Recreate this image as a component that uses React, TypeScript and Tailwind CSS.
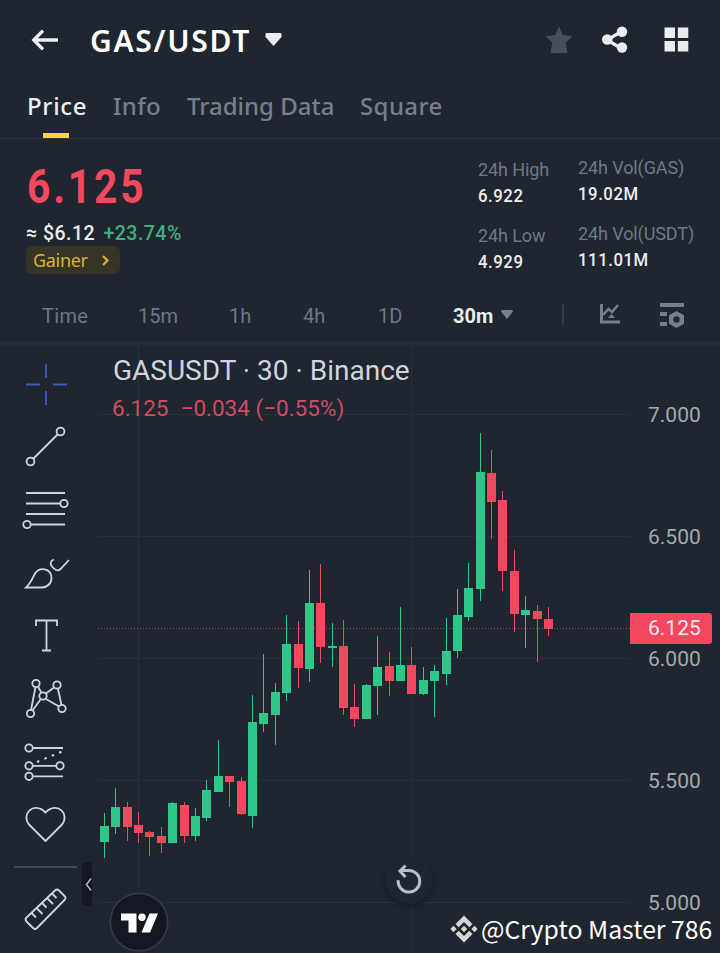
import React from 'react';

type Candle = {
  x: number;
  high: number;
  top: number;
  bottom: number;
  low: number;
  up: boolean;
};

const GREEN = '#2dc78a';
const RED = '#f4485f';

// [left, high, top, bottom, low, direction]
const rawCandles: [number, number, number, number, number, number][] = [
  [100, 813, 826, 842, 858, 1],
  [111, 788, 807, 827, 834, 1],
  [123, 802, 807, 827, 841, 0],
  [134, 812, 825, 833, 843, 0],
  [145, 831, 832, 837, 856, 0],
  [157, 827, 836, 843, 853, 0],
  [168, 802, 803, 843, 843, 1],
  [180, 802, 805, 836, 843, 0],
  [191, 808, 816, 836, 841, 1],
  [202, 780, 790, 818, 821, 1],
  [214, 740, 776, 792, 792, 1],
  [225, 776, 776, 782, 807, 0],
  [237, 777, 781, 814, 815, 0],
  [248, 695, 722, 816, 828, 1],
  [259, 654, 713, 724, 732, 1],
  [271, 683, 692, 715, 745, 1],
  [282, 615, 644, 693, 701, 1],
  [294, 621, 644, 668, 688, 0],
  [305, 570, 603, 669, 682, 1],
  [316, 564, 603, 647, 663, 0],
  [328, 623, 646, 648, 667, 1],
  [339, 620, 646, 708, 715, 0],
  [350, 684, 707, 719, 727, 0],
  [362, 684, 685, 719, 719, 1],
  [373, 636, 667, 686, 715, 1],
  [385, 652, 666, 681, 696, 0],
  [396, 607, 665, 681, 681, 1],
  [407, 647, 665, 694, 694, 0],
  [419, 667, 680, 694, 695, 1],
  [430, 665, 671, 681, 717, 1],
  [442, 618, 651, 674, 685, 1],
  [453, 589, 615, 651, 658, 1],
  [464, 563, 588, 617, 621, 1],
  [476, 433, 472, 589, 601, 1],
  [487, 450, 473, 502, 539, 0],
  [498, 491, 500, 571, 591, 0],
  [510, 550, 571, 614, 632, 0],
  [521, 596, 610, 615, 648, 1],
  [533, 605, 611, 619, 662, 0],
  [544, 607, 619, 629, 636, 0],
];

const candles: Candle[] = rawCandles.map(([x, high, top, bottom, low, up]) => ({
  x,
  high,
  top,
  bottom,
  low,
  up: up === 1,
}));

const prices = ['7.000', '6.500', '6.000', '5.500', '5.000'];

const ToolIcon = ({ children }: { children: React.ReactNode }) => (
  <svg
    width="48"
    height="48"
    viewBox="0 0 48 48"
    fill="none"
    stroke="#d0d4de"
    strokeWidth="1.8"
    className="block shrink-0"
  >
    {children}
  </svg>
);

const Header = () => (
  <header className="flex h-[80px] items-center pl-[31px] pr-[31px]">
    <svg width="28" height="22" viewBox="0 0 28 22" fill="none" stroke="#eaecef" strokeWidth="3.4" className="block">
      <path d="M12 1.600 2.800 11l9.200 9.400M2.500 11H27" />
    </svg>
    <h1 className="ml-[31px] mt-[2px] whitespace-nowrap font-['Noto_Sans'] text-[30px] font-semibold leading-[36px] tracking-[1.7px] text-white">
      GAS/USDT
    </h1>
    <svg width="17" height="14" viewBox="0 0 17 14" fill="#eaecef" className="ml-[14px] block">
      <path d="M1.500 0h14q1.200.2 1 1.500v2.500L8.500 13 .5 4V1.500Q.3.2 1.500 0Z" />
    </svg>
    <div className="ml-auto flex items-center">
      <svg width="28" height="28" viewBox="0 0 28 28" fill="#474f5e" stroke="#474f5e" strokeLinejoin="round" className="block">
        <path d="m15 1.500 3.600 8 9 1-6.600 6.300 2 9.700H7l2-9.700L2.400 10.500l9-1Z" />
      </svg>
      <svg width="28" height="28" viewBox="0 0 28 28" fill="#eaecef" className="ml-[28px] block">
        <path d="M21.500 5.500 7 14l14.500 8.500" fill="none" stroke="#eaecef" strokeWidth="3.200" />
        <circle cx="7.300" cy="13.500" r="5.300" />
        <circle cx="22" cy="5.700" r="5.200" />
        <circle cx="22" cy="21.500" r="5.200" />
      </svg>
      <svg width="25" height="26" viewBox="0 0 25 26" fill="#eaecef" className="ml-[36px] block">
        <path d="M.5.500h10.500V11H.5ZM13.800.5h10.500V11H13.800ZM.5 14h10.500v10.500H.5ZM13.800 14h10.500v10.500H13.800Z" />
      </svg>
    </div>
  </header>
);

const Tabs = () => (
  <nav className="flex h-[59px] border-b border-[#2f3641] pl-[27px] font-['Noto_Sans'] text-[24px] font-medium leading-[32px] text-[#777f8f]">
    <div className="flex w-[59px] flex-col">
      <span className="mt-[10px] whitespace-nowrap tracking-[0.700px] text-[#eaecef]">Price</span>
      <span className="ml-[16px] mt-auto h-[5px] w-[26px] bg-[#f5d14c]" />
    </div>
    <span className="ml-[27px] mt-[10px] w-[47px] whitespace-nowrap tracking-[0.300px]">Info</span>
    <span className="ml-[27px] mt-[10px] w-[146px] whitespace-nowrap">Trading Data</span>
    <span className="ml-[27px] mt-[10px] whitespace-nowrap tracking-[0.400px]">Square</span>
  </nav>
);

const Stat = ({ label, value }: { label: string; value: string }) => (
  <div className="h-[66px] whitespace-nowrap">
    <div className="text-[18px] leading-[26px] tracking-[-0.100px] text-[#6f7787]">{label}</div>
    <div className="origin-left scale-x-[0.93] text-[18px] font-medium leading-[26px] tracking-[0.600px] text-[#eaecef]">
      {value}
    </div>
  </div>
);

const Summary = () => (
  <section className="flex h-[148px] pl-[26px] font-[Roboto]">
    <div className="w-[452px]">
      <div className="ml-px mt-[19px] origin-left scale-x-[0.85] whitespace-nowrap text-[48px] font-bold leading-[58px] tracking-[3.300px] text-[#f4485f]">
        6.125
      </div>
      <div className="mt-[4px] flex h-[26px] origin-left scale-x-[0.93] items-center whitespace-nowrap text-[21px] font-medium leading-[26px] tracking-[0.500px]">
        <span className="text-[#eaecef]">≈ $6.12</span>
        <span className="ml-[9px] text-[#3fae80]">+23.74%</span>
      </div>
      <div className="flex h-[28px] w-[94px] items-center justify-between rounded-[6px] bg-[#363427] pl-[7px] pr-[11px] font-['Noto_Sans'] text-[18px] leading-[26px] tracking-[-0.300px] text-[#dcb12c]">
        <span>Gainer</span>
        <svg width="7" height="11" viewBox="0 0 7 11" fill="none" stroke="#dcb12c" strokeWidth="2.200" className="block">
          <path d="m1 1 4.500 4.500L1 10" />
        </svg>
      </div>
    </div>
    <div className="mt-[18px] w-[100px]">
      <Stat label="24h High" value="6.922" />
      <Stat label="24h Low" value="4.929" />
    </div>
    <div className="mt-[16px]">
      <Stat label="24h Vol(GAS)" value="19.02M" />
      <Stat label="24h Vol(USDT)" value="111.01M" />
    </div>
  </section>
);

const Intervals = () => (
  <div className="flex h-[58px] items-center border-b-4 border-[#252c37] pl-[42px] font-[Roboto] text-[20px] text-[#6f7787]">
    <span className="mt-[3px] w-[96px] tracking-[0.300px]">Time</span>
    <span className="mt-[3px] w-[91px]">15m</span>
    <span className="mt-[3px] w-[74px]">1h</span>
    <span className="mt-[3px] w-[75px]">4h</span>
    <span className="mt-[3px] w-[75px]">1D</span>
    <span className="mt-[3px] w-[48px] font-bold text-[#eaecef]">30m</span>
    <svg width="12" height="9" viewBox="0 0 12 9" fill="#777f8f" className="block">
      <path d="M1 0h10l1 1.500L6 9 0 1.500Z" />
    </svg>
    <span className="ml-[49px] h-[21px] w-[2px] bg-[#343b47]" />
    <svg width="20" height="20" viewBox="0 0 20 20" fill="none" stroke="#777f8f" className="ml-[36px] block">
      <path d="M1.500 0v18H20" strokeWidth="3" />
      <path d="m3 11 5.500-6 3.500 3 6-7" strokeWidth="2.500" />
      <path d="m8 14 3.500-4L15 14Z" fill="#777f8f" stroke="none" />
    </svg>
    <svg width="26" height="26" viewBox="0 0 26 26" fill="#777f8f" className="ml-[39px] mt-[2px] block">
      <path d="M1 1h24v4H1ZM1 10h7v4H1ZM1 20h7v4H1Z" />
      <path
        fillRule="evenodd"
        d="m17.500 9 7.500 4.300v8.400L17.500 26 10 21.700v-8.400Zm0 5.300a3.200 3.200 0 1 0 0 6.400 3.200 3.200 0 0 0 0-6.400Z"
      />
    </svg>
  </div>
);

const Toolbar = () => (
  <aside className="flex w-[98px] shrink-0 flex-col pl-[22px] pt-[16px]">
    <div className="flex flex-col gap-[15px]">
      <ToolIcon>
        <path d="M24 4v14M24 31v14M4 24.500h14M31 24.500h14" stroke="#3c5cc4" />
      </ToolIcon>
      <ToolIcon>
        <path d="m11.500 35.500 24-24" />
        <circle cx="8.500" cy="38.500" r="3.900" />
        <circle cx="38.500" cy="8.500" r="3.900" />
      </ToolIcon>
      <ToolIcon>
        <path d="M4 7h39M4 17.500h34M4 28h39M9 38.500h34" />
        <circle cx="42" cy="17.500" r="3.700" />
        <circle cx="5" cy="38.500" r="3.700" />
      </ToolIcon>
      <ToolIcon>
        <path d="M4 38.500c5-4.500 6.500-9.500 9-14 4.500-7 16-5.500 16.500 4 .3 6-4.500 10-9.500 10Z" />
        <path d="M32 10.500c-3.500 1.500-4.500 4-2 7s5.500 5.500 8.500 2.500l8.500-9" />
      </ToolIcon>
      <ToolIcon>
        <path d="M14 14V8.500h21V14M24.500 9v29M20 38.500h9" />
      </ToolIcon>
      <ToolIcon>
        <path d="M13.500 12 9 35M16 11.500l3.500 6.500M24 18.500 32 12.500M36 14l3.500 16M24 24l13 7.500M18.500 24.500 10.500 35.500" />
        <circle cx="14" cy="8.500" r="3.700" />
        <circle cx="35" cy="10" r="3.700" />
        <circle cx="21" cy="21" r="3.700" />
        <circle cx="8.500" cy="38.500" r="3.700" />
        <circle cx="40" cy="33.500" r="3.700" />
      </ToolIcon>
      <ToolIcon>
        <path d="M11 10h30M11 27.800h23M11 38.300h30" />
        <path d="m15 24 25-10.500" strokeDasharray="2.500 5.500" strokeWidth="2" />
        <circle cx="7" cy="10" r="3.700" />
        <circle cx="7" cy="27.800" r="3.700" />
        <circle cx="38" cy="27.800" r="3.700" />
        <circle cx="7" cy="38.300" r="3.700" />
      </ToolIcon>
      <ToolIcon>
        <path d="M23.500 40 7 23.500C-1 14 11-.5 23.500 11.500 36-.5 48 14 40 23.500Z" strokeLinejoin="round" />
      </ToolIcon>
    </div>
    <div className="-ml-[8px] mt-[17px] h-[2px] w-[63px] bg-[#434a55]" />
    <div className="mt-[18px]">
      <ToolIcon>
        <path d="M4.500 31.500 33 4.500q2-2 4 0l5.500 5.500q2 2 0 4L15 42q-2 2-4 0l-6.500-6.500q-2-2 0-4Z" />
        <path d="m9.500 27 4.500 4.500M14.500 22l6 6M20 17l4.500 4.500M25 12l6 6M30 7.500l4.500 4.500" />
      </ToolIcon>
    </div>
  </aside>
);

const CandleChart = () => (
  <svg width="532" height="609" viewBox="98 344 532 609" shapeRendering="crispEdges" className="block">
    <path
      d="M138.500 344V953M411.500 344V953M98 414.500H630M98 536.500H630M98 658.500H630M98 780.500H630M98 902.500H630"
      stroke="#29303b"
    />
    <path d="M98 628.500H630" stroke="#b4465a" strokeDasharray="1 2" />
    {candles.map((c) => (
      <g key={c.x} fill={c.up ? GREEN : RED}>
        <rect x={c.x + 4} y={c.high} width="1" height={c.low - c.high} />
        <rect x={c.x} y={c.top} width="9" height={c.bottom - c.top} />
      </g>
    ))}
  </svg>
);

const PriceAxis = () => (
  <div className="relative w-[90px] shrink-0 pt-[10px]">
    {prices.map((price) => (
      <div key={price} className="flex h-[122px] items-center pl-[18px] text-[21px] leading-[18px] text-[#a3a8b3]">
        {price}
      </div>
    ))}
    <div className="absolute left-0 top-[269px] flex h-[31px] w-[82px] items-center rounded-r-[3px] bg-[#f4485f] pl-[18px] text-[21px] leading-[21px] text-[#fbe9ee]">
      6.125
    </div>
  </div>
);

const TradingViewBadge = () => (
  <svg width="60" height="60" viewBox="0 0 60 60" className="absolute left-[109px] top-[548px]">
    <circle cx="30" cy="30" r="28.700" fill="#131722" stroke="#363a45" strokeWidth="1.800" />
    <path
      d="M12 21.500h15.500v19h-8V28.500H12ZM40.500 21.500H49l-8 19h-8.500Z"
      fill="#fff"
    />
    <circle cx="33" cy="25.200" r="3.700" fill="#fff" />
  </svg>
);

const ResetButton = () => (
  <div className="absolute left-[385px] top-[512px] flex h-12 w-12 items-center justify-center rounded-full bg-[#1f262f] shadow-[0_2px_5px_rgba(0,0,0,0.3)]">
    <svg width="26" height="30" viewBox="0 0 26 30" fill="none" stroke="#b8bdc9" strokeWidth="3" className="-mt-[2px] block">
      <path d="M2.200 16.200a10.800 10.800 0 1 0 10.800-9.700H5" />
      <path d="M9.500 1.500 4 7l5.500 6" />
    </svg>
  </div>
);

const Watermark = () => (
  <div className="absolute left-[450px] top-[571px] flex h-[28px] items-center whitespace-nowrap">
    <svg width="28" height="28" viewBox="0 0 28 28" fill="#d5d5d5" className="block">
      <path d="m14 .5 8.500 8.500-3.200 3.200L14 7l-5.300 5.200L5.500 9ZM14 27.500 5.500 19l3.200-3.200L14 21l5.300-5.200 3.200 3.200ZM3.500 10.800 6.700 14l-3.200 3.200L.3 14ZM24.500 10.800l3.200 3.200-3.200 3.200-3.200-3.200ZM14 10.800l3.200 3.200-3.200 3.200-3.200-3.200Z" />
    </svg>
    <span className="-mt-[3px] ml-[3px] font-['Noto_Sans_CJK_SC',sans-serif] text-[24.800px] leading-[26px] text-white">
      @Crypto Master 786
    </span>
  </div>
);

export default function App() {
  return (
    <main className="h-[953px] w-[720px] overflow-hidden bg-[#1f262f] font-[Roboto]">
      <Header />
      <Tabs />
      <Summary />
      <Intervals />
      <section className="relative -mt-px flex h-[609px]">
        <Toolbar />
        <CandleChart />
        <PriceAxis />
        <div className="absolute left-[113px] top-[9px] whitespace-nowrap text-[28px] leading-[36px] text-[#d0d4de]">
          GASUSDT · 30 · Binance
        </div>
        <div className="absolute left-[112px] top-[50px] flex whitespace-nowrap text-[22.500px] leading-[28px] text-[#d04a60]">
          <span>6.125</span>
          <span className="ml-[12px]">−0.034 (−0.55%)</span>
        </div>
        {/* collapse handle of the drawing toolbar */}
        <div className="absolute left-[82px] top-[518px] flex h-[44px] w-[10px] items-center justify-end rounded-l-[5px] bg-[#131722]">
          <svg width="7" height="13" viewBox="0 0 7 13" fill="none" stroke="#b8bdc9" strokeWidth="1.400" className="block">
            <path d="M6 .5 1.500 6.500 6 12.500" />
          </svg>
        </div>
        <TradingViewBadge />
        <ResetButton />
        <Watermark />
      </section>
    </main>
  );
}
